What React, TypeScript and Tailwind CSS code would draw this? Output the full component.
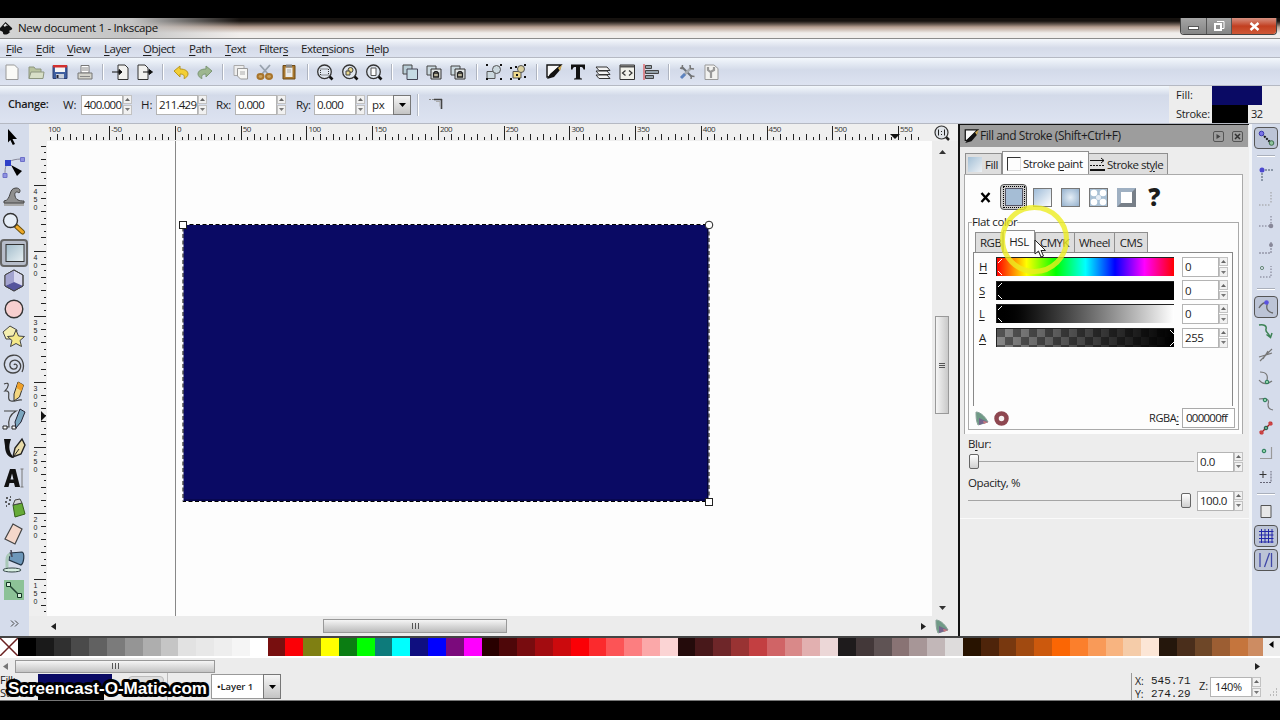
import type { ReactNode } from "react";
import clsx from "clsx";

const svgIcon = (body: ReactNode, size = 18) => (
	<svg width={size} height={size} viewBox="0 0 18 18" fill="none" className="shrink-0">
		{body}
	</svg>
);

const magnifier = (inner: ReactNode) =>
	svgIcon(
		<>
			<path d="M13.500 13.500l3 3" stroke="#111" strokeWidth="2.600" />
			<circle cx="8.500" cy="8.800" r="6.800" fill="#dfe6ef" stroke="#333" strokeWidth="1.300" />
			{inner}
		</>
	);

const lockOverlay = (
	<>
		<path d="M2 3h9v9H2z" fill="#cbd9e0" stroke="#444" />
		<path d="M6 6h10v10H6z" fill="#dfe3e3" stroke="#333" />
		<path d="M8.500 10h5v4h-5z" fill="#bbb59b" stroke="#222" strokeWidth="1.300" />
		<path d="M9.500 10V8.500h3V10" stroke="#222" />
	</>
);

const commands: (ReactNode | "sep")[] = [
	svgIcon(<path d="M3 2h8.500l3.500 3.500V16.500H3z" fill="#fafaf7" stroke="#999" />),
	svgIcon(
		<>
			<path d="M2 15.500V4h5l1.500 2H14v3" fill="#b9c3a0" stroke="#8d9680" />
			<path d="M2 15.500L4 9h13l-1 6.500z" fill="#d8dfc8" stroke="#8d9680" />
		</>
	),
	svgIcon(
		<>
			<path d="M2 2.500h14v13H2z" fill="#3f5fa0" stroke="#2c3e72" />
			<path d="M4 3h10v6H4z" fill="#f5f5f5" />
			<path d="M2 2h14v2.500H2z" fill="#d22f2f" />
			<path d="M5 11h8v4.500H5z" fill="#c9d0dc" />
			<path d="M6.500 12v3" stroke="#223" strokeWidth="2" />
		</>
	),
	svgIcon(
		<>
			<path d="M5 2.500h8V10H5z" fill="#fff" stroke="#777" />
			<path d="M2 10h14v6H2z" fill="#d4d4cc" stroke="#777" />
			<path d="M6 5h6M6 7h6M4 13.500h10" stroke="#888" />
		</>
	),
	"sep",
	svgIcon(
		<>
			<path d="M6 2h7l3 3v11.500H6z" fill="#f1f1ef" stroke="#333" />
			<path d="M0 9h9M7 6.500L10 9l-3 2.500z" stroke="#111" fill="#111" />
		</>
	),
	svgIcon(
		<>
			<path d="M2 2h7l3 3v11.500H2z" fill="#f1f1ef" stroke="#333" />
			<path d="M7 9h8M13 6.500L16.500 9 13 11.500z" stroke="#111" fill="#111" />
		</>
	),
	"sep",
	svgIcon(<path d="M2 8l6-5v3c5 0 8 2 8 5 0 2-2 4-4 4.500 1-3-.5-4.500-4-4.500v3z" fill="#f3cf35" stroke="#b89620" />),
	svgIcon(<path d="M16 8l-6-5v3C5 6 2 8 2 11c0 2 2 4 4 4.500-1-3 .5-4.500 4-4.500v3z" fill="#9db68f" stroke="#7c9674" />),
	"sep",
	svgIcon(
		<>
			<path d="M2 2.500h10v10H2z" fill="#eee" stroke="#aaa" />
			<path d="M5.500 5.500h10V16h-7l-3-3z" fill="#f7f7f5" stroke="#999" />
			<path d="M8 9h5M8 11h5" stroke="#aaa" />
		</>
	),
	svgIcon(
		<>
			<path d="M4 2l8 9M14 2L6 11" stroke="#98a2ad" strokeWidth="1.800" />
			<ellipse cx="4.500" cy="13.500" rx="3" ry="2.400" fill="#c9a05c" stroke="#a8742a" strokeWidth="2" />
			<ellipse cx="13" cy="13.500" rx="3" ry="2.400" fill="#c9a05c" stroke="#a8742a" strokeWidth="2" />
		</>
	),
	svgIcon(
		<>
			<path d="M3 2.500h12v13.500H3z" fill="#a9782f" stroke="#6c4a18" />
			<path d="M5.500 4.500h7v9.500h-7z" fill="#ececea" />
			<path d="M6 1.500h6v3H6z" fill="#888" />
			<path d="M7 7h4M7 9h4" stroke="#aaa" />
		</>
	),
	"sep",
	magnifier(<path d="M4.500 6h8v6h-8z" stroke="#333" strokeDasharray="1 1" />),
	magnifier(
		<>
			<circle cx="9.500" cy="7" r="2.500" fill="#ead98c" stroke="#444" />
			<path d="M5 8h4v4H5z" fill="#ead98c" stroke="#444" />
		</>
	),
	magnifier(<path d="M6 5h5v7.500H6z" fill="#fff" stroke="#555" />),
	"sep",
	svgIcon(
		<>
			<path d="M2 2h9v9H2z" fill="#b9cdd6" stroke="#444" />
			<path d="M6 6h10.500v10.500H6z" fill="#c5dae4" stroke="#445" />
		</>
	),
	svgIcon(lockOverlay),
	svgIcon(lockOverlay),
	"sep",
	svgIcon(
		<>
			<path d="M2 8.500h8v7H2z" fill="#cbd8de" stroke="#555" />
			<circle cx="11.500" cy="6.500" r="4" fill="#cbd8de" stroke="#555" />
			<path d="M1 2h2M1 16h2M15 2h2M15 16h2" stroke="#111" strokeWidth="2" />
		</>
	),
	svgIcon(
		<>
			<path d="M4 8.500h8v6.500H4z" fill="#eed98c" stroke="#555" />
			<circle cx="12" cy="6" r="3.500" fill="#d9cf9f" stroke="#555" />
			<path d="M1 5h2M6 4h2M15 2h2M1 16h2M7 12h2M15 14h2M9 16h2" stroke="#111" strokeWidth="2" />
		</>
	),
	"sep",
	svgIcon(
		<>
			<path d="M2 2h14L4 14H2z" fill="#f8f8f8" stroke="#111" strokeWidth="1.400" />
			<path d="M2 16l3-5 8-7 3-1-1 4-6 7z" fill="#111" />
			<path d="M13 5l4-3-2 6z" fill="#cda951" />
		</>
	),
	svgIcon(<path d="M2 1.500h14v5h-1.500c-.5-2-1-2.500-3.500-2.500v10c0 1.500.5 1.500 2 1.500v1H5v-1c1.500 0 2 0 2-1.500V4C4.500 4 4 4.500 3.500 6.500H2z" fill="#111" />),
	svgIcon(<path d="M2 12h11l3 3.500H5zM2 8h11l3 3.500H5zM2 4h11l3 3.500H5z" fill="#f3f3f3" stroke="#333" strokeLinejoin="round" />),
	svgIcon(
		<>
			<path d="M2 2h14.500v14.500H2z" fill="#f1f1ea" stroke="#333" />
			<path d="M2 3.500h14" stroke="#555" strokeWidth="2" />
			<path d="M7.500 7.500L4.500 10l3 2.500M11 7.500l3 2.500-3 2.500" stroke="#333" strokeWidth="1.200" />
		</>
	),
	svgIcon(
		<>
			<path d="M2 1v16" stroke="#d33" />
			<path d="M3.500 2.500h6v3h-6zM3.500 7.500h13v3h-13zM3.500 12.500h8v3h-8z" fill="#96a3ab" stroke="#444" />
		</>
	),
	"sep",
	svgIcon(
		<>
			<path d="M4 4l10 10" stroke="#6c7178" strokeWidth="2" />
			<path d="M13 5L4 14" stroke="#a8acb0" strokeWidth="2.500" />
			<path d="M3 15l4-4" stroke="#5d83c0" strokeWidth="3" />
			<path d="M12 2l.5 3.500L16 6M2 5l2 .5L4.500 2M13 16l.5-3 3 .5" stroke="#777" strokeWidth="1.500" />
		</>
	),
	svgIcon(
		<>
			<path d="M3 2h9l4 3.500v11H3z" fill="#f2f2f0" stroke="#999" />
			<path d="M6 4v3l2.500 2L12 7V4M9 9v6" stroke="#999" strokeWidth="2.200" />
		</>
	),
];

const tools: ReactNode[] = [
	<path d="M8 2l9 10h-4.500l2.500 5-2.200 1-2.500-5L8 15.500z" fill="#000" />,
	<>
		<path d="M5 19C5 10 6 4 23 4" stroke="#889" />
		<path d="M5 5h6v6H5z" fill="#2e40c8" />
		<path d="M20.500 2.500h4v4h-4zM3 18.500h4v4H3z" fill="#8f92e0" stroke="#6d70c9" />
		<path d="M11 10l11 6-5 5z" fill="#000" />
	</>,
	<>
		<path d="M4 19h20v4H4z" fill="#aaa" />
		<path d="M4 18c8-1 4-13 12-13 4 0 5 3 3 5-2-2-5-1-4 3 1 4 4 5 9 5v2H4z" fill="#8f8f8f" stroke="#444" />
	</>,
	<>
		<path d="M16 15l6.500 6" stroke="#6e5410" strokeWidth="5" strokeLinecap="round" />
		<path d="M17 16l5.500 5" stroke="#efa928" strokeWidth="3" strokeLinecap="round" />
		<circle cx="10.500" cy="9.500" r="7" fill="#e7eef7" stroke="#333" strokeWidth="1.400" />
	</>,
	<rect x="6" y="5.500" width="18" height="17" fill="url(#sheen)" stroke="#333" />,
	<>
		<path d="M5 8l9-5 9 5v11l-9 5-9-5z" fill="#d8d8ee" stroke="#444" />
		<path d="M5 8l9-5v12l-9 4z" fill="#a3a3cf" />
		<path d="M5 19l9-4 9 4-9 5z" fill="#55559c" />
		<path d="M5 8l9-5 9 5v11l-9 5-9-5z" stroke="#444" />
	</>,
	<circle cx="14" cy="14" r="8.800" fill="#f7cfcf" stroke="#333" strokeWidth="1.400" />,
	<>
		<path d="M10 3l7 4-2 9H6L3 9z" fill="#f4eeb0" stroke="#444" />
		<path d="M16 7l2.500 6 6 .5-4.500 4 1.500 6-5.500-3-5.500 3 1.500-6-4.500-4 6-.5z" fill="#f5e98a" stroke="#444" />
	</>,
	<path d="M14 14c1-2 4 0 3 2-1 3-6 3-7-1-1-5 5-8 9-4 4 5 0 11-6 11C6 22 3 15 5 10c3-7 13-8 17-1 2 4 2 8 0 12" stroke="#444" strokeWidth="1.300" />,
	<>
		<path d="M4 5c7-3 4 4 1 7 8-1 0 9 6 10 6 1 6-2 11-1" stroke="#444" strokeWidth="1.200" />
		<path d="M18 3l5.500 3-4 12-5.500 4v-7z" fill="#f3d680" stroke="#333" />
		<path d="M18 3l5.500 3-2 6-5-3z" fill="#efa02a" />
	</>,
	<>
		<path d="M4 4h12C9 8 8 14 9 20H6" stroke="#444" strokeWidth="1.200" />
		<path d="M3 19h4v3H3zM12 19h4v3h-4z" fill="#fff" stroke="#222" />
		<path d="M20 2l5 3-4 10-5 6-1-6z" fill="#7ba6bf" stroke="#223" />
	</>,
	<>
		<path d="M4 3h7c-3 8-2 13 3 19-7 0-9-7-9-12z" fill="#111" />
		<path d="M22 3l3 6-4 9-8 3 2-9z" fill="#e8dba8" stroke="#222" strokeWidth="1.400" />
		<path d="M14 20l5-7" stroke="#222" />
	</>,
	<>
		<path d="M4 23L10 5h5.500L20 23h-5l-1-4H9.500l-1 4zM10.500 15.500h3L12 9.500z" fill="#111" />
		<path d="M22 5v18M20.500 5h3M20.500 23h3" stroke="#777" />
	</>,
	<>
		<path d="M13 13l9-2 3 11-10 3z" fill="#66ab38" stroke="#346018" />
		<path d="M13 13l2-5 5-1 2 4z" fill="#d5d5d5" stroke="#444" />
		<path d="M6 6h2M9 8h2M5 10h2M8 12h2M6 14h1M10 5h1" stroke="#333" strokeWidth="1.600" />
	</>,
	<path d="M13 4l9 5-7 15-10-5z" fill="#f4d7ca" stroke="#444" strokeWidth="1.200" />,
	<>
		<path d="M10 5l12-1c3 1 2 11-1 13L9 12z" fill="#6d97ba" stroke="#234" strokeWidth="1.200" />
		<path d="M10 6c-4 2-3 6-3 14" stroke="#a9c8b8" strokeWidth="3" />
		<path d="M11 2l1 7" stroke="#445" strokeWidth="1.500" />
		<ellipse cx="12" cy="22" rx="9" ry="2" fill="#d8efe2" stroke="#344" />
	</>,
	<>
		<path d="M4 4h20v20H4z" fill="#8cc297" />
		<path d="M8 8l12 12" stroke="#243" strokeWidth="1.500" />
		<path d="M6.500 6.500h4v4h-4zM17.500 17.500h4v4h-4z" fill="#d8f0dc" stroke="#132" />
	</>,
];

const snaps: { icon: ReactNode | "sep"; on?: boolean }[] = [
	{
		icon: (
			<>
				<path d="M5 5l9 9" stroke="#111" strokeWidth="2" strokeDasharray="2 1" />
				<circle cx="4.500" cy="4.500" r="2.300" fill="#7b74e8" stroke="#3a38b0" />
				<circle cx="14.500" cy="14" r="2.300" fill="#8fc29c" stroke="#3a6c4a" />
			</>
		),
		on: true,
	},
	{ icon: "sep" },
	{
		icon: (
			<>
				<path d="M5 5v11M5 5h11" stroke="#456" strokeDasharray="2 1" />
				<circle cx="5" cy="5" r="2.500" fill="#4c48cf" />
			</>
		),
	},
	{ icon: <path d="M2 16h12M14 3v12" stroke="#999" strokeDasharray="1.500 1.500" /> },
	{
		icon: (
			<>
				<path d="M2 13h12M14 3v12" stroke="#778" strokeDasharray="1.500 1.500" />
				<circle cx="14" cy="13" r="2.300" fill="#889" />
			</>
		),
	},
	{
		icon: (
			<>
				<path d="M2 15h12V4" stroke="#778" strokeDasharray="2 1" />
				<circle cx="14" cy="7" r="2" fill="#889" />
			</>
		),
	},
	{
		icon: (
			<>
				<path d="M3 15h11V4" stroke="#778" strokeDasharray="1.500 1.500" />
				<circle cx="5" cy="6" r="1.600" stroke="#687" />
			</>
		),
	},
	{ icon: "sep" },
	{
		icon: (
			<>
				<path d="M2 10c4-7 9-6 8-3-1 4 1 7 6 8" stroke="#666" strokeWidth="1.300" />
				<circle cx="9.500" cy="4.500" r="2.300" fill="#5a52e0" />
			</>
		),
		on: true,
	},
	{ icon: <path d="M2 3c5-1 8 1 7 4-1 4 3 3 4 8M9.500 12.500l4 3 1.500-4.500" stroke="#3c8254" strokeWidth="1.500" /> },
	{ icon: <path d="M3 15L15 3M2 11l13-4M6 13l5-8" stroke="#777" strokeWidth="1.200" /> },
	{
		icon: (
			<>
				<path d="M3 2c7 0 8 4 7 8M2 10c4 5 9 4 13 1" stroke="#777" strokeWidth="1.200" />
				<circle cx="10" cy="12" r="1.800" fill="#8fd0a4" stroke="#275" />
			</>
		),
	},
	{
		icon: (
			<>
				<path d="M2 4c7-1 11 0 9 5 0 4 1 5 5 6" stroke="#777" strokeWidth="1.200" />
				<circle cx="8" cy="5" r="1.800" fill="#8fd0a4" stroke="#275" />
			</>
		),
	},
	{
		icon: (
			<>
				<path d="M3 15L15 3" stroke="#a22" strokeWidth="1.500" />
				<path d="M3 12l3 3M12 3l3 3" stroke="#c44" strokeWidth="3" />
				<circle cx="9" cy="9" r="1.800" fill="#6a8" stroke="#254" />
			</>
		),
	},
	{
		icon: (
			<>
				<path d="M3 15.500h11.500V4" stroke="#999" strokeWidth="1.200" />
				<circle cx="7" cy="8" r="1.800" fill="#8fd0a4" stroke="#275" />
			</>
		),
	},
	{
		icon: (
			<>
				<path d="M6 4v7M2.500 7.500h7" stroke="#333" />
				<path d="M3 15.500h11V4" stroke="#667" strokeDasharray="2 1" />
			</>
		),
	},
	{ icon: "sep" },
	{ icon: <path d="M4 2.500h10v12H4z" fill="#e8e8e8" stroke="#555" /> },
	{ icon: <path d="M4.500 2v14M8 2v14M11.500 2v14M15 2v14M2 4.500h14.500M2 8h14.500M2 11.500h14.500M2 15h14.500" stroke="#2227a8" />, on: true },
	{ icon: <path d="M3 2v14M7.500 16l5-14M14.500 2v14" stroke="#4048a8" strokeWidth="1.300" />, on: true },
];

const palette = [
	"#000000", "#1a1a1a", "#303030", "#4a4a4a", "#616161", "#7b7b7b", "#959595", "#aeaeae", "#c5c5c5",
	"#e2e2e2", "#e8e8e8", "#eeeeee", "#f5f5f5", "#ffffff",
	"#780f0f", "#fb0006", "#7f7f12", "#ffff00", "#0b7d12", "#00ff00", "#0d7b7b", "#00ffff", "#0f0f80",
	"#0000ff", "#7b0a7c", "#ff00ff",
	"#280000", "#4e0709", "#780c0f", "#a30c10", "#cc0a0d", "#fb0006", "#fb2a2d", "#fc5456", "#fc7e80",
	"#fba8a9", "#fbd4d4",
	"#240b0b", "#48181a", "#6e2629", "#993333", "#c33f41", "#d06466", "#d98989", "#e2b0b0", "#ecd7d7",
	"#1e1b1c", "#433839", "#5f5354", "#897374", "#a79697", "#c2b7b8", "#dedcdc",
	"#281300", "#4e240a", "#78380f", "#a14a10", "#cc590d", "#fb6604", "#fb7f2c", "#f99a58", "#f8b480",
	"#f5cca9", "#fce6d6",
	"#25170c", "#4a2e1b", "#6e4728", "#9c5e33", "#c5753d", "#cd8c62",
];

const menus: [string, number, string][] = [
	["File", 0, "w-[30px]"],
	["Edit", 0, "w-[31px]"],
	["View", 0, "w-[37px]"],
	["Layer", 0, "w-[39px]"],
	["Object", 0, "w-[46px]"],
	["Path", 0, "w-[36px]"],
	["Text", 0, "w-[34px]"],
	["Filters", 6, "w-[42px]"],
	["Extensions", 4, "w-[65px]"],
	["Help", 0, "w-[40px]"],
];

function Mnemonic({ text, at }: { text: string; at: number }) {
	return (
		<>
			{text.slice(0, at)}
			<span className="underline underline-offset-2">{text[at]}</span>
			{text.slice(at + 1)}
		</>
	);
}

function Spin({ value, width, className }: { value: string; width: string; className?: string }) {
	return (
		<div className={clsx("flex h-5 shrink-0", className)}>
			<div className={clsx("flex items-center overflow-hidden border border-[#b4b4b4] bg-white pl-[2px]", width)}>{value}</div>
			<div className="flex w-[9px] flex-col gap-px">
				<div className="flex flex-1 items-center justify-center border border-[#c2c2c2] bg-[#f1f1f1]">
					<svg width="5" height="3"><path d="M0 3h5L2.500 0z" fill="#666" /></svg>
				</div>
				<div className="flex flex-1 items-center justify-center border border-[#c2c2c2] bg-[#f1f1f1]">
					<svg width="5" height="3"><path d="M0 0h5L2.500 3z" fill="#777" /></svg>
				</div>
			</div>
		</div>
	);
}

function DropButton({ className }: { className?: string }) {
	return (
		<div className={clsx("flex items-center justify-center border border-[#777] bg-linear-to-b from-[#f6f6f6] to-[#c4c4c4]", className)}>
			<svg width="7" height="4"><path d="M0 0h7L3.500 4z" fill="#000" /></svg>
		</div>
	);
}

function TitleBar() {
	return (
		<div className="flex h-[21px] shrink-0 items-center justify-between border-b border-[#8c8c8c] bg-linear-to-b from-[#16120f] from-15% via-[#b59e90] via-45% to-[#f1eeec] to-75%">
			<div className="flex h-full w-[240px] items-center gap-[5px] bg-linear-to-r from-[#d4d4d4] via-[#c4c4c4] via-55% to-transparent">
				<svg width="13" height="14" viewBox="0 0 13 14">
					<path d="M5.500 1L12 7c1 2-2 2-3 3 1 1 2 1 0 2-2 2-6 2-6 0 0-1 0-1-2-2-3-1-1-3 0-4z" fill="#111" />
					<path d="M5.500 2.500L8 5l-2-.5L5 6 3.500 4.500z" fill="#eee" />
				</svg>
				<span className="text-[11.500px] tracking-[-0.330px] text-[#111]">New document 1 - Inkscape</span>
			</div>
			<div className="mr-[3px] flex h-[17px] self-start overflow-hidden rounded-b border border-t-0 border-[#444] text-white">
				<div className="flex w-[26px] items-end justify-center border-r border-[#555] bg-linear-to-b from-[#a5a5a5] to-[#858585] pb-1">
					<div className="h-[4px] w-[11px] border border-[#555] bg-white" />
				</div>
				<div className="flex w-[25px] items-center justify-center border-r border-[#555] bg-linear-to-b from-[#a5a5a5] to-[#858585]">
					<svg width="12" height="12" fill="none"><path d="M4 1.500h7v7H9" stroke="#fff" /><path d="M2 4h6v6H2z" stroke="#fff" strokeWidth="2" /></svg>
				</div>
				<div className="flex w-[44px] items-center justify-center bg-linear-to-b from-[#d69080] via-[#c23f20] to-[#cf5836]">
					<svg width="11" height="9"><path d="M1.500 1l8 7M9.500 1l-8 7" stroke="#fff" strokeWidth="2.500" /></svg>
				</div>
			</div>
		</div>
	);
}

function ControlBar() {
	return (
		<div className="flex h-[38px] shrink-0 border-b border-[#b5b9c3]">
			<div className="flex flex-1 items-center bg-linear-to-b from-[#f3f8fc] via-[#d3dae9] via-25% to-[#dde3f1] pl-2 text-[11.500px]">
				<span className="w-[55px] text-[11px] font-semibold tracking-[-0.350px]">Change:</span>
				<span className="w-[18px]">W:</span>
				<Spin value="400.000" width="w-[42px] tracking-[-0.750px]" />
				<span className="ml-[9px] w-[15px]">H:</span>
				<Spin value="211.429" width="w-[42px] tracking-[-0.750px]" />
				<span className="ml-[9px] w-[19px] tracking-[-0.4px]">Rx:</span>
				<Spin value="0.000" width="w-[42px] tracking-[-0.6px]" />
				<span className="ml-[10px] w-[18px] tracking-[-0.4px]">Ry:</span>
				<Spin value="0.000" width="w-[42px] tracking-[-0.6px]" />
				<div className="ml-[2px] flex h-5">
					<div className="flex w-[26px] items-center border border-r-0 border-[#b4b4b4] bg-white pl-1 tracking-[-0.4px]">px</div>
					<DropButton className="w-[18px]" />
				</div>
				<div className="ml-[6px] h-[22px] w-px bg-[#b4bac6] shadow-[1px_0_0_#fff]" />
				<svg width="16" height="16" className="ml-[10px]" fill="none">
					<path d="M1 2.500h2M4 2.500h2" stroke="#888" />
					<path d="M6 2.500h8M13.500 2v10" stroke="#444" strokeWidth="1.600" />
					<path d="M8 4.500h4v5" stroke="#aaa" />
				</svg>
			</div>
			<div className="flex w-[111px] gap-1 bg-[#ededed] pl-[7px] text-[11px]">
				<div className="flex w-[32px] flex-col">
					<span className="flex h-[19px] items-center">Fill:</span>
					<span className="flex h-[19px] items-center tracking-[-0.3px]">Stroke:</span>
				</div>
				<div className="flex flex-col">
					<div className="h-[19px] w-[50px] bg-[#0a0a64]" />
					<div className="flex h-[18px] items-center">
						<div className="h-full w-[36px] bg-black" />
						<span className="pl-[3px] tracking-[-0.5px]">32</span>
					</div>
				</div>
			</div>
		</div>
	);
}

function HRuler() {
	const step = 6.573;
	const ticks = Array.from({ length: 150 }, (_, i) => i - 20).filter((i) => 128 + i * step > 2 && 128 + i * step < 877);
	return (
		<svg width="884" height="17" className="block bg-[#efefef]">
			{ticks.map((i) => (
				<rect key={i} x={Math.round(128 + i * step)} y={i % 10 === 0 ? 2 : i % 2 === 0 ? 10 : 13} width="1" height={i % 10 === 0 ? 14 : i % 2 === 0 ? 6 : 3} fill="#222" />
			))}
			{Array.from({ length: 14 }, (_, i) => i - 2).map((i) => (
				<text key={i} x={i === -2 ? 1 : 130 + i * step * 10} y="8" fontSize="8" fill="#333" letterSpacing="-0.5">
					{i === -2 ? "100" : i * 50}
				</text>
			))}
			<path d="M843 10h10l-5 5z" fill="#111" />
		</svg>
	);
}

function VRuler() {
	const step = 6.56;
	const ticks = Array.from({ length: 74 }, (_, i) => i - 6);
	return (
		<svg width="17" height="475" className="block shrink-0 bg-[#efefef]">
			{ticks.map((i) => {
				const len = i % 10 === 0 ? 12 : i % 2 === 0 ? 5 : 2;
				return <rect key={i} x={16 - len} y={Math.round(44 + i * step)} width={len} height="1" fill="#222" />;
			})}
			{[450, 400, 350, 300, 250, 200, 150].map((n, row) =>
				String(n).split("").map((d, k) => (
					<text key={`${n}-${k}`} x="3.500" y={53 + row * 65.6 + k * 8} fontSize="7" fontFamily="Liberation Sans" fill="#222">
						{d}
					</text>
				))
			)}
			<path d="M11 270v10l5-5z" fill="#111" />
		</svg>
	);
}

function Grip({ vertical }: { vertical?: boolean }) {
	return (
		<div className={clsx("flex", vertical ? "flex-col gap-px" : "gap-[2px]")}>
			{[0, 1, 2].map((i) => (
				<div key={i} className={vertical ? "h-px w-[6px] bg-[#555]" : "h-[6px] w-px bg-[#555]"} />
			))}
		</div>
	);
}

function GamutIcon() {
	return (
		<svg width="14" height="15" viewBox="0 0 14 15">
			<path d="M1 1c5 0 10 6 12 10L3 14C1 10 1 5 1 1z" fill="#6f9a86" stroke="#8aa39a" />
			<path d="M4 7l9 4-9 3z" fill="#73658c" />
			<path d="M8 10l5 1-4 2z" fill="#c9797f" />
		</svg>
	);
}

function Canvas() {
	return (
		<div className="flex w-[929px] flex-col">
			<div className="flex h-[17px] bg-[#efefef] pl-[18px]">
				<HRuler />
				<svg width="18" height="17" viewBox="0 0 18 17" className="ml-[2px] shrink-0">
					<path d="M12 12l4 4" stroke="#222" strokeWidth="2.500" />
					<circle cx="8.500" cy="8.500" r="6.500" fill="#dfe3e8" stroke="#333" strokeWidth="1.200" />
					<path d="M5.500 5.500v6M11.500 5.500v6M8.500 7v1M8.500 10v1" stroke="#222" />
				</svg>
			</div>
			<div className="flex h-[475px]">
				<div className="w-px bg-[#efefef]" />
				<VRuler />
				<div className="flex-1 bg-[#fdfdfd]">
					<svg width="884" height="475" className="block">
						<path d="M128.500 0v475" stroke="#888" />
						<rect x="136" y="83.500" width="526" height="277" fill="#0a0a64" stroke="#f5f5f5" />
						<rect x="136" y="83.500" width="526" height="277" fill="none" stroke="#000" strokeDasharray="4 2.500" />
						<path d="M137 359h524M660.500 85v274" stroke="#05053a" />
						<rect x="132.500" y="80.500" width="7" height="7" fill="#fff" stroke="#222" />
						<rect x="658.500" y="357.500" width="7" height="7" fill="#fff" stroke="#222" />
						<circle cx="662" cy="84" r="3.800" fill="#fff" stroke="#222" />
					</svg>
				</div>
				<div className="flex w-[26px] flex-col items-center bg-[#ececec] pt-[9px] pr-[6px]">
					<svg width="7" height="4"><path d="M0 4h7L3.500 0z" fill="#333" /></svg>
					<div className="mt-[162px] flex h-[98px] w-[14px] items-center justify-center border border-[#999] bg-linear-to-r from-[#f5f5f5] to-[#c9c9c9]">
						<Grip vertical />
					</div>
					<svg width="7" height="4" className="mt-[192px]"><path d="M0 0h7L3.500 4z" fill="#333" /></svg>
				</div>
			</div>
			<div className="flex h-5 items-center bg-[#ececec] pl-[22px]">
				<svg width="5" height="7"><path d="M5 0v7L0 3.500z" fill="#222" /></svg>
				<div className="ml-[267px] flex h-[14px] w-[184px] items-center justify-center border border-[#999] bg-linear-to-b from-[#f5f5f5] to-[#bcbcbc]">
					<Grip />
				</div>
				<svg width="5" height="7" className="ml-[414px]"><path d="M0 0v7l5-3.500z" fill="#222" /></svg>
				<div className="ml-[9px]"><GamutIcon /></div>
			</div>
		</div>
	);
}

function ColorRow({ label, value, bar, end }: { label: string; value: string; bar: string; end?: boolean }) {
	return (
		<div className="flex h-[23.600px] items-center">
			<span className="w-[22px] pl-[5px] underline underline-offset-2">{label}</span>
			<div className={clsx("flex h-[19px] w-[178px] items-center border-t border-l border-[#222]", bar, end && "justify-end")}>
				<svg width="5" height="18" fill="none">
					{end ? (
						<path d="M1 1l4 4M1 17l4-4" stroke="#fff" />
					) : (
						<path d="M5 1L1 5M5 17l-4-4" stroke="#fff" />
					)}
				</svg>
			</div>
			<Spin value={value} width="w-[37px]" className="ml-[8px]" />
		</div>
	);
}

function FillStrokePanel() {
	const tab = "flex items-center border border-b-0 border-[#8f8f8f]";
	return (
		<div className="flex w-[291px] flex-col border-t border-l-2 border-[#111] bg-[#ededed] text-[11.500px] tracking-[-0.4px]">
			<div className="mr-px flex h-[22px] shrink-0 items-center bg-[#9d9d9d] pl-[3px] text-[12px]">
				<svg width="17" height="16" viewBox="0 0 18 18">
					<path d="M2 2h14L4 14H2z" fill="#f8f8f8" stroke="#111" strokeWidth="1.400" />
					<path d="M2 17l3-5 8-7 3-1-1 4-6 7z" fill="#111" />
					<path d="M13 5l4-3-2 6z" fill="#cda951" />
				</svg>
				<span className="flex-1 tracking-[-0.450px]">Fill and Stroke (Shift+Ctrl+F)</span>
				<svg width="11" height="11" fill="none" className="mr-2"><rect x=".5" y=".5" width="10" height="10" rx="1.500" stroke="#555" /><path d="M3.500 3l4 2.500-4 2.500z" fill="#444" /></svg>
				<svg width="11" height="11" fill="none" className="mr-[5px]"><rect x=".5" y=".5" width="10" height="10" rx="1.500" stroke="#555" /><path d="M3 3l5 5M8 3L3 8" stroke="#333" strokeWidth="1.500" /></svg>
			</div>
			<div className="flex h-[27px] shrink-0 items-end pl-[5px]">
				<div className={clsx(tab, "h-[21px] w-[37px] bg-[#dedede] pt-px pl-[2px]")}>
					<div className="mr-[3px] h-[15px] w-[14px] bg-linear-to-br from-[#a4c0d6] to-[#edf1f5]" />
					<span>Fill</span>
				</div>
				<div className={clsx(tab, "h-[23px] w-[87px] bg-[#fdfdfd] pt-px pl-1")}>
					<div className="mr-[2px] h-[14px] w-[14px] border border-[#333] border-r-[#ddd] border-b-[#ddd]" />
					<span className="tracking-[-0.450px]"><Mnemonic text="Stroke paint" at={7} /></span>
				</div>
				<div className={clsx(tab, "h-[21px] w-[79px] border-l-0 bg-[#dedede] pt-px pl-px")}>
					<svg width="17" height="15" stroke="#111"><path d="M0 3.500h14M11 1l3 2.500L11 6" fill="none" /><path d="M0 8.500h15" strokeDasharray="2 1" /><path d="M0 13h15" strokeWidth="2" /></svg>
					<span className="tracking-[-0.5px]"><Mnemonic text="Stroke style" at={9} /></span>
				</div>
			</div>
			<div className="ml-1 h-[260px] w-[279px] shrink-0 border border-b-0 border-[#aaa] bg-[#fdfdfd] px-[3px]">
				<div className="flex h-[44px] items-center pl-[3px]">
					<div className="flex w-[28px] justify-center"><svg width="11" height="11"><path d="M1.500 1l8 9M9.500 1l-8 9" stroke="#000" strokeWidth="2.400" /></svg></div>
					<div className="flex w-[29px] justify-center">
						<div className="flex h-[26px] w-[27px] shrink-0 items-center justify-center rounded-sm border border-[#555] bg-[#ccc]">
							<div className="flex h-[22px] w-[22px] items-center justify-center border border-dotted border-black">
								<div className="h-[18px] w-[18px] border border-[#556] bg-[#a5bdd5]" />
							</div>
						</div>
					</div>
					<div className="flex w-[28px] justify-center"><div className="h-[19px] w-[19px] border border-[#777] bg-linear-to-br from-[#9fbcd8] to-white" /></div>
					<div className="flex w-[28px] justify-center"><div className="h-[19px] w-[19px] border border-[#777] bg-radial from-[#e5eef6] to-[#94b0cc]" /></div>
					<div className="flex w-[28px] justify-center">
						<svg width="19" height="19"><rect x=".5" y=".5" width="18" height="18" fill="#a9c0d4" stroke="#777" />{[5, 14].map((y) => [5, 14].map((x) => <circle key={`${x}${y}`} cx={x} cy={y} r="3.300" fill="#fff" />))}<circle cx="9.500" cy="9.500" r="2.500" fill="#e6edf5" /></svg>
					</div>
					<div className="flex w-[28px] justify-center"><div className="h-[19px] w-[19px] border-4 border-t-[#9fb0c2] border-r-[#777f88] border-b-[#777f88] border-l-[#9fb0c2] bg-white" /></div>
					<div className="flex w-[28px] justify-center text-[24px] leading-5 font-extrabold">?</div>
				</div>
				<fieldset className="-mt-[4px] h-[215px] border border-[#aaa] pl-[4px]">
					<legend className="-ml-px h-[15px] leading-[14px]">Flat color</legend>
					<div className="flex h-[22px] items-end pl-[2px] tracking-[-0.5px]">
						<div className={clsx(tab, "h-[20px] w-[28px] bg-[#dedede] pl-1")}>RGB</div>
						<div className={clsx(tab, "h-[22px] w-[32px] justify-center bg-[#fdfdfd]")}>HSL</div>
						<div className={clsx(tab, "h-[20px] w-[40px] bg-[#dedede] pl-1")}>CMYK</div>
						<div className={clsx(tab, "h-[20px] w-[40px] justify-center border-l-0 bg-[#dedede]")}>Wheel</div>
						<div className={clsx(tab, "h-[20px] w-[33px] justify-center border-l-0 bg-[#dedede]")}>CMS</div>
					</div>
					<div className="h-[154px] w-[260px] border border-b-0 border-[#888] pt-[2px]">
						<ColorRow label="H" value="0" bar="bg-[linear-gradient(to_right,#f00,#ff0,#0f0,#0ff,#00f,#f0f,#f00)]" />
						<ColorRow label="S" value="0" bar="bg-black" />
						<ColorRow label="L" value="0" bar="bg-linear-to-r from-black to-white" />
						<ColorRow label="A" value="255" end bar="bg-[linear-gradient(to_right,transparent,#000),conic-gradient(#888_25%,#555_0_50%,#888_0_75%,#555_0)] bg-[size:100%_100%,16px_16px]" />
					</div>
					<div className="flex h-[24px] items-center pl-[2px]">
						<GamutIcon />
						<svg width="15" height="15" className="ml-[5px]"><circle cx="7.500" cy="7.500" r="5" fill="#f5f0f0" stroke="#8e4750" strokeWidth="4.500" /></svg>
						<span className="ml-[140px] w-[33px] text-[11px]"><Mnemonic text="RGBA:" at={4} /></span>
						<div className="flex h-5 w-[53px] items-center border border-[#aaa] bg-white pl-[3px] tracking-[-0.750px]">000000ff</div>
					</div>
				</fieldset>
			</div>
			<div className="h-[85px] shrink-0 border-b border-[#fafafa] pl-2">
				<div className="h-[17px] leading-[20px]"><Mnemonic text="Blur:" at={1} /></div>
				<div className="flex h-[21px] items-center pl-px">
					<div className="h-[15px] w-[10px] rounded-xs border border-[#666] bg-linear-to-b from-white to-[#d0d0d0]" />
					<div className="h-px w-[215px] bg-[#a5a5a5]" />
					<Spin value="0.0" width="w-[37px]" className="ml-[3px]" />
				</div>
				<div className="h-[18px] leading-[22px]">Opacity, %</div>
				<div className="flex h-[21px] items-center">
					<div className="h-px w-[213px] bg-[#a5a5a5]" />
					<div className="h-[15px] w-[10px] rounded-xs border border-[#666] bg-linear-to-b from-white to-[#d0d0d0]" />
					<Spin value="100.0" width="w-[37px] tracking-[-0.5px]" className="ml-[6px]" />
				</div>
			</div>
		</div>
	);
}

function BottomBars() {
	return (
		<>
			<div className="flex h-5 shrink-0 border-t-2 border-[#444] bg-[#ededed]">
				<div className="flex w-[1263px] overflow-hidden">
					<svg width="18" height="18" className="shrink-0 bg-white"><path d="M0 0l18 18M18 0L0 18" stroke="#6b2020" strokeWidth="1.500" /></svg>
					{palette.map((color, i) => (
						<div key={i} className="h-full w-[17.830px] shrink-0" style={{ background: color }} />
					))}
				</div>
				<svg width="5" height="7" className="mt-[3px] ml-[6px]"><path d="M4.500 0v7L0 3.500z" fill="#000" /></svg>
			</div>
			<div className="flex h-[17px] shrink-0 items-center border-t-2 border-white bg-[#ececec] pt-px pl-[3px]">
				<svg width="5" height="7"><path d="M5 0v7L0 3.500z" fill="#777" /></svg>
				<div className="ml-[7px] flex h-[13px] w-[200px] items-center justify-center border border-[#999] bg-linear-to-b from-[#f5f5f5] to-[#c4c4c4]">
					<Grip />
				</div>
				<svg width="5" height="7" className="mr-[20px] ml-auto"><path d="M0 0v7l5-3.500z" fill="#222" /></svg>
			</div>
			<div className="relative flex h-[28px] shrink-0 border-b border-[#777] bg-[#ececec] text-[11px]">
				<div className="flex w-[38px] flex-col overflow-hidden leading-[13px] tracking-[-0.3px]">
					<span>Fill:</span>
					<span>Stroke:</span>
				</div>
				<div className="flex w-[74px] flex-col pt-px">
					<div className="h-[13px] bg-[#0a0a64]" />
					<div className="h-[13px] w-[66px] bg-black" />
				</div>
				<div className="mt-[3px] ml-4 h-[8px] w-[36px] rounded-full border border-[#bbb] bg-[#ddd]" />
				<div className="ml-[3px] h-full w-px bg-[#bbb]" />
				<div className="mt-px ml-[43px] flex h-[25px]">
					<div className="flex w-[52px] items-center border border-r-0 border-[#999] bg-white pt-px pl-[5px] text-[9.500px] font-semibold tracking-[-0.1px]">•Layer 1</div>
					<DropButton className="w-[18px]" />
				</div>
				<div className="ml-auto flex border-l border-[#999] pl-[3px]">
					<div className="flex w-[16px] flex-col pt-[2px] text-[10.500px] leading-[13px]"><span>X:</span><span>Y:</span></div>
					<div className="flex w-[48px] flex-col pt-[2px] font-['Liberation_Mono'] text-[11px] leading-[13px]"><span>545.71</span><span>274.29</span></div>
					<span className="w-[11px] self-center">Z:</span>
					<Spin value="140%" width="w-[42px] pl-[4px] tracking-[-0.3px]" className="mt-[4px]" />
					<svg width="9" height="9" className="mt-[15px] mr-[2px] ml-[8px]"><path d="M7 1h1M7 4h1M4 4h1M7 7h1M4 7h1M1 7h1" stroke="#aaa" strokeWidth="1.500" /></svg>
				</div>
				<svg width="216" height="24" className="absolute top-[3px] left-0 overflow-visible">
					<text x="8" y="17.500" textLength="199" lengthAdjust="spacingAndGlyphs" fontSize="16.500" fontWeight="700" fill="#fff" stroke="#000" strokeWidth="6" strokeLinejoin="round" paintOrder="stroke" fontFamily="Liberation Sans">
						Screencast-O-Matic.com
					</text>
				</svg>
			</div>
		</>
	);
}

export default function App() {
	return (
		<div className="relative flex h-[720px] w-[1280px] flex-col overflow-hidden bg-black pt-[18px] font-['Open_Sans','Noto_Sans',sans-serif] text-[#1c1c1c]">
			<TitleBar />
			<div className="flex h-[19px] shrink-0 items-center border-b border-[#b5b9c3] bg-linear-to-b from-[#f5f8fc] via-[#d5dbe9] via-50% to-[#dce2ef] pt-px pl-[6px] text-[11.500px] tracking-[-0.5px]">
				{menus.map(([name, at, width]) => (
					<span key={name} className={width}>
						<Mnemonic text={name} at={at} />
					</span>
				))}
			</div>
			<div className="flex h-[28px] shrink-0 items-center border-b border-[#b5b9c3] bg-linear-to-b from-[#f3f8fc] via-[#d3dae9] via-45% to-[#dde3f1]">
				{commands.map((item, i) =>
					item === "sep" ? (
						<div key={i} className="flex w-[11.800px] justify-center">
							<div className="h-[16px] w-px bg-[#aeb4c0] shadow-[1px_0_0_#fff]" />
						</div>
					) : (
						<div key={i} className="flex w-[24.200px] justify-center">{item}</div>
					)
				)}
			</div>
			<ControlBar />
			<div className="flex h-[512px] shrink-0 bg-[#ededed]">
				<div className="flex w-[29px] flex-col bg-[#d5dceb] pt-[3px]">
					{tools.map((icon, i) => (
						<div key={i} className={clsx("flex h-[28.050px] w-[28px] shrink-0 items-center justify-center", i === 4 && "rounded border-2 border-[#666] bg-[#b7bdca]")}>
							<svg width="28" height="28" viewBox="0 0 28 28" fill="none" className="shrink-0">
								<defs>
									<linearGradient id="sheen" x1="0" y1="0" x2="1" y2="1">
										<stop stopColor="#a2bccb" />
										<stop offset="1" stopColor="#e8f0f3" />
									</linearGradient>
								</defs>
								{icon}
							</svg>
						</div>
					))}
					<svg width="9" height="7" className="mt-[16px] ml-[10px]" fill="none" stroke="#444"><path d="M1 .5l3 3-3 3M5 .5l3 3-3 3" /></svg>
				</div>
				<Canvas />
				<FillStrokePanel />
				<div className="w-[3px] bg-[#f4f6f8]" />
				<div className="flex w-[28px] flex-col items-center bg-[#d5dceb] pt-[2px]">
					{snaps.map(({ icon, on }, i) =>
						icon === "sep" ? (
							<div key={i} className="flex h-[11.800px] shrink-0 items-center">
								<div className="h-[2px] w-[18px] border-t border-[#aab0bc] bg-white" />
							</div>
						) : (
							<div key={i} className="flex h-[24.200px] shrink-0 items-center">
								<div className={clsx("flex h-[22px] w-[24px] items-center justify-center", on && "rounded-sm border border-[#555] bg-[#bcc4d6]")}>
									{svgIcon(icon)}
								</div>
							</div>
						)
					)}
				</div>
			</div>
			<BottomBars />

			{/* click highlight and pointer */}
			<div className="absolute top-[205px] left-[1000px] h-[69px] w-[69px] rounded-full border-[5px] border-[#ecec20]/80" />
			<svg width="13" height="20" className="absolute top-[239px] left-[1034px]">
				<path d="M1 1v14l3.500-3 2.500 6 2.500-1-2.500-5.500h4.500z" fill="#fff" stroke="#222" />
			</svg>
		</div>
	);
}
